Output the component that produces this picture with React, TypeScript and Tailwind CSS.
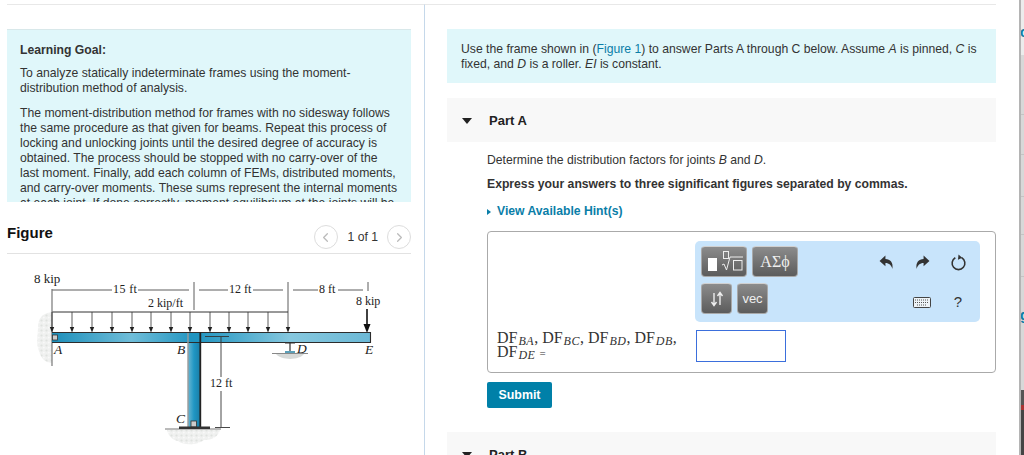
import { ChevronLeft, ChevronRight } from "lucide-react";

const loadArrows = [52, 72, 92, 112, 132, 151, 171, 190, 210, 229, 248, 268, 288];
const edgeRows = [60, 40, 42, 38, 42];

const FrameFigure = () => (
  <svg width="420" height="200" viewBox="0 255 420 200" className="block">
    <defs>
      <linearGradient id="beam" x1="0" y1="0" x2="1" y2="0">
        <stop offset="0" stopColor="#1d8fba" />
        <stop offset="0.25" stopColor="#6fbdd9" />
        <stop offset="0.45" stopColor="#1f94c0" />
        <stop offset="0.75" stopColor="#86c8df" />
        <stop offset="1" stopColor="#6cb9d6" />
      </linearGradient>
      <linearGradient id="column" x1="0" y1="0" x2="1" y2="0">
        <stop offset="0" stopColor="#6ab6d2" />
        <stop offset="0.5" stopColor="#1f96c4" />
        <stop offset="1" stopColor="#1a7ea8" />
      </linearGradient>
      <pattern id="gravel" width="5" height="5" patternUnits="userSpaceOnUse">
        <rect width="5" height="5" fill="#f0f1f0" />
        <circle cx="1.500" cy="1.500" r="1.100" fill="#dfe2df" />
        <circle cx="3.800" cy="3.600" r="0.900" fill="#fafafa" />
      </pattern>
    </defs>

    <path d="M52 313 C42 314 38 320 38 328 C38 336 36 345 39 352 C41 360 46 364 52 364 Z" fill="url(#gravel)" />
    <path d="M167 431 H220 C218 438 212 441 204 441 C198 446 184 447 178 442 C172 441 168 436 167 431 Z" fill="url(#gravel)" />
    <path d="M276 355 H304 C300 361 282 362 276 355 Z" fill="#d6d9d8" />

    {/* dimensions */}
    <g stroke="#333" strokeWidth="0.8" fill="none">
      <path d="M52 291 H112 M138 291 H189 M199 291 H228 M253 291 H283 M293 291 H318 M338 291 H363" />
      <path d="M194 283 V311 M288 283 V313 M368 283 V292" />
      <path d="M52 313 H288" strokeWidth="1" />
    </g>
    <path d="M52 290 V367" stroke="#777" strokeWidth="1.2" />

    {loadArrows.map((x) => (
      <g key={x}>
        <line x1={x} y1="313" x2={x} y2="329" stroke="#333" strokeWidth="0.8" />
        <path d={`M${x - 2.2} 328 L${x} 333.500 L${x + 2.2} 328 Z`} fill="#222" />
      </g>
    ))}
    <line x1="367" y1="310" x2="367" y2="327" stroke="#111" strokeWidth="1.6" />
    <path d="M363.500 325 L367 334 L370.500 325 Z" fill="#111" />

    {/* frame */}
    <rect x="188" y="343" width="12" height="85" fill="url(#column)" />
    <rect x="52" y="334" width="318" height="9" fill="url(#beam)" />
    <rect x="188" y="334" width="12" height="9" fill="#1f94c0" />
    <path d="M52 333.500 H370.500 V343.500 H52" fill="none" stroke="#2c2c2c" strokeWidth="1.100" />
    <path d="M188 334 V429" stroke="#9a9a9a" strokeWidth="1.400" />
    <path d="M200.300 333 V429" stroke="#222" strokeWidth="1.800" />
    <rect x="52.500" y="336" width="5" height="5" fill="#ccc" stroke="#333" strokeWidth="0.8" />
    <rect x="191" y="422" width="5.500" height="6" fill="#ccc" stroke="#333" strokeWidth="0.8" />
    <path d="M205 337.500 H229 M221 338 V378 M221 392 V428 M215 428.500 H230" stroke="#333" strokeWidth="0.9" fill="none" />

    {/* supports */}
    <path d="M165 430 H221" stroke="#777" strokeWidth="1" />
    <rect x="179" y="427.500" width="31" height="2.500" fill="#333" />
    <path d="M285 344 H295 M290 344 V352 M285 352.500 H295" stroke="#333" strokeWidth="1.200" fill="none" />
    <rect x="285" y="352" width="10" height="2" fill="#5a9fb8" />
    <path d="M272 354.500 H308" stroke="#888" strokeWidth="1" />

    <g fontFamily="'Liberation Serif', serif" fontSize="12" fill="#222">
      <text x="34" y="284" fontSize="13">8 kip</text>
      <text x="113" y="294" letterSpacing="0.4">15 ft</text>
      <text x="148" y="308">2 kip/ft</text>
      <text x="229" y="294">12 ft</text>
      <text x="319" y="294">8 ft</text>
      <text x="356" y="306">8 kip</text>
      <text x="210" y="388">12 ft</text>
      <g fontStyle="italic" fontSize="13.500">
        <text x="54" y="355">A</text>
        <text x="177" y="355">B</text>
        <text x="176" y="424">C</text>
        <text x="297" y="353.500">D</text>
        <text x="365" y="355">E</text>
      </g>
    </g>
  </svg>
);

const ToolButton = ({ className, children }: { className: string; children: React.ReactNode }) => (
  <div
    className={`flex h-[31px] items-center justify-center rounded-[4px] border border-[#a8a8a8] border-t-[#d0d0d0] bg-gradient-to-b from-[#8c8c8c] to-[#5c5c5c] text-[#eee] ${className}`}
  >
    {children}
  </div>
);

const Sub = ({ children }: { children: React.ReactNode }) => (
  <sub className="bottom-[-2px] ml-[1px] text-[12px] italic leading-none tracking-[0.5px]">{children}</sub>
);

const PartHeader = ({ title }: { title: string }) => (
  <div className="flex h-[44px] items-center bg-[#f8f8f8] pl-[15px]">
    <span className="mt-[1px] h-0 w-0 border-x-[5px] border-t-[6px] border-x-transparent border-t-[#222]" />
    <span className="ml-[17px] text-[13px] font-bold text-[#222]">{title}</span>
  </div>
);

export default function App() {
  return (
    <div className="flex h-[455px] w-[1024px] overflow-hidden bg-white font-['Liberation_Sans',sans-serif] text-[12.2px] leading-[15px] text-[#333]">
      {/* left column */}
      <div className="ml-[7px] mt-[4px] w-[418px] shrink-0 border-r border-t border-r-[#c5d8ea] border-t-[#e8e8e8] pr-[13px] pt-[24px]">
        <div className="h-[173px] overflow-hidden border-t border-[#d8e8ea] bg-[#e0f7fa] pl-[13px] pr-[13px] pt-[13px]">
          <p className="font-bold">Learning Goal:</p>
          <p className="mt-[8px]">To analyze statically indeterminate frames using the moment-distribution method of analysis.</p>
          <p className="mt-[10px]">
            The moment-distribution method for frames with no sidesway follows the same procedure as that given for
            beams. Repeat this process of locking and unlocking joints until the desired degree of accuracy is obtained.
            The process should be stopped with no carry-over of the last moment. Finally, add each column of FEMs,
            distributed moments, and carry-over moments. These sums represent the internal moments at each joint. If done
            correctly, moment equilibrium at the joints will be
          </p>
        </div>
        <div className="flex h-[52px] items-start justify-between border-b border-[#e2e2e2] pt-[23px]">
          <h2 className="text-[15px] font-bold leading-[15px] text-[#111]">Figure</h2>
          <div className="flex items-center">
            <span className="flex h-[24px] w-[24px] items-center justify-center rounded-full border border-[#ddd] text-[#bbb]">
              <ChevronLeft size={15} />
            </span>
            <span className="ml-[10px] mr-[9px] text-[#333]">1 of 1</span>
            <span className="flex h-[24px] w-[24px] items-center justify-center rounded-full border border-[#ddd] text-[#bbb]">
              <ChevronRight size={15} />
            </span>
          </div>
        </div>
        <div className="-ml-[7px]">
          <FrameFigure />
        </div>
      </div>

      {/* right column */}
      <div className="mt-[4px] w-[571px] shrink-0 border-t border-[#e8e8e8] pt-[24px]">
        <div className="ml-[22px]">
          <div className="h-[54px] bg-[#e0f7fa] px-[14px] pt-[12.500px]">
            Use the frame shown in (<span className="text-[#0a7ea8]">Figure 1</span>) to answer Parts A through C below.
            Assume <i>A</i> is pinned, <i>C</i> is fixed, and <i>D</i> is a roller. <i>EI</i> is constant.
          </div>
          <div className="mt-[15px]">
            <PartHeader title="Part A" />
          </div>
          <div className="pl-[40px]">
            <p className="mt-[11px]">
              Determine the distribution factors for joints <i>B</i> and <i>D</i>.
            </p>
            <p className="mt-[9px] font-bold">Express your answers to three significant figures separated by commas.</p>
            <p className="mt-[12px] flex items-center font-bold text-[#0a7ea8]">
              <span className="mr-[6px] h-0 w-0 border-y-[3.500px] border-l-[4px] border-y-transparent border-l-[#0a7ea8]" />
              View Available Hint(s)
            </p>

            <div className="mt-[12px] h-[142px] rounded-[4px] border border-[#aaa] pl-[9px] pr-[15px] pt-[9px]">
              <div className="ml-[198px] h-[81px] rounded-[5px] bg-[#c8e4fb] pl-[6px] pr-[4px] pt-[5px]">
                <div className="flex items-start justify-between">
                  <div className="flex flex-col gap-[6px]">
                    <div className="flex gap-[5px]">
                      <ToolButton className="w-[46px]">
                        <svg width="44" height="29" viewBox="1 1 44 29" className="block">
                          <rect x="7" y="12" width="9" height="13" fill="#fff" />
                          <path d="M21 19 L23 18 L25.500 24 L29 11 H42" fill="none" stroke="#eee" strokeWidth="1" />
                          <rect x="32.500" y="14.500" width="8.500" height="9.500" fill="none" stroke="#eee" strokeWidth="1" />
                          <rect x="22.500" y="5.500" width="5" height="7" fill="none" stroke="#eee" strokeWidth="1" />
                        </svg>
                      </ToolButton>
                      <ToolButton className="w-[46px] font-['Liberation_Serif',serif] text-[16px]">ΑΣϕ</ToolButton>
                    </div>
                    <div className="flex gap-[5px]">
                      <ToolButton className="w-[31px]">
                        <svg width="14" height="16" viewBox="0 0 14 16" fill="none" stroke="#eee" strokeWidth="1.400">
                          <path d="M4 2 V14 M1.500 11 L4 14.500 L6.500 11 M10 14 V2 M7.500 5 L10 1.500 L12.500 5" />
                        </svg>
                      </ToolButton>
                      <ToolButton className="w-[31px] text-[13px]">vec</ToolButton>
                    </div>
                  </div>
                  <div className="grid w-[108px] grid-cols-3 items-center justify-items-center gap-y-[23px] pt-[8px]">
                    <svg width="15" height="15" viewBox="0 0 14 14" fill="#333">
                      <path d="M0.500 5.500 L6 0.500 V3.800 C10.500 3.800 13.500 7 12.500 13 C11.500 9.500 9.500 7.500 6 7.500 V10.500 Z" />
                    </svg>
                    <svg width="15" height="15" viewBox="0 0 14 14" fill="#333">
                      <path d="M13.500 5.500 L8 0.500 V3.800 C3.500 3.800 0.500 7 1.500 13 C2.500 9.500 4.500 7.500 8 7.500 V10.500 Z" />
                    </svg>
                    <svg width="17" height="17" viewBox="0 0 16 16" fill="none" stroke="#333" strokeWidth="1.500">
                      <path d="M5 3.500 A6 6 0 1 0 11 3.500" />
                      <path d="M8 0.500 L11.500 3.500 L7.500 5.500 Z" fill="#333" stroke="none" />
                    </svg>
                    <span />
                    <svg width="18" height="11" viewBox="0 0 18 11" className="mt-[2px]">
                      <rect x="0.500" y="0.500" width="17" height="10" rx="1" fill="#eef4f8" stroke="#444" />
                      <path d="M2 3 H16 M2 5.500 H16 M4 8 H14" stroke="#555" strokeWidth="1" strokeDasharray="1 1" />
                    </svg>
                    <span className="text-[15px] leading-[15px]">?</span>
                  </div>
                </div>
              </div>
              <div className="mt-[8px] flex">
                <div className="w-[199px] pt-[1px] font-['Liberation_Serif',serif] text-[16px] leading-[13px] text-[#333]">
                  DF<Sub>BA</Sub>, DF<Sub>BC</Sub>, DF<Sub>BD</Sub>, DF<Sub>DB</Sub>,
                  <br />
                  DF<Sub>DE</Sub> <span className="text-[11px]">=</span>
                </div>
                <div className="h-[32px] w-[90px] border border-[#3b6fdc] bg-white" />
              </div>
            </div>

            <button className="mt-[9px] block h-[26px] w-[65px] rounded-[2px] bg-[#0080a8] text-[12.400px] font-bold text-white">
              Submit
            </button>
          </div>
          <div className="mt-[24px]">
            <PartHeader title="Part B" />
          </div>
        </div>
      </div>

      {/* edge of the next window */}
      <div className="ml-[23px] flex h-full flex-1 flex-col overflow-hidden border-l-2 border-[#b4b4b4] bg-[#d8d8d8] text-[14px] font-bold text-[#0a7ea8]">
        <div className="-ml-[2px] h-[55px] bg-[#ececec] pl-[1px] pt-[25px]">c</div>
        {edgeRows.map((h, i) => (
          <div key={i} className="border-b border-[#c4c4c4]" style={{ height: h }} />
        ))}
        <div className="-ml-[2px] h-[113px] pl-[1px] pt-[31px]">g</div>
        <div className="h-[15px] bg-[#555]" />
        <div className="h-[5px] bg-[#a33]" />
        <div className="flex-1 bg-[#444]" />
      </div>
    </div>
  );
}
